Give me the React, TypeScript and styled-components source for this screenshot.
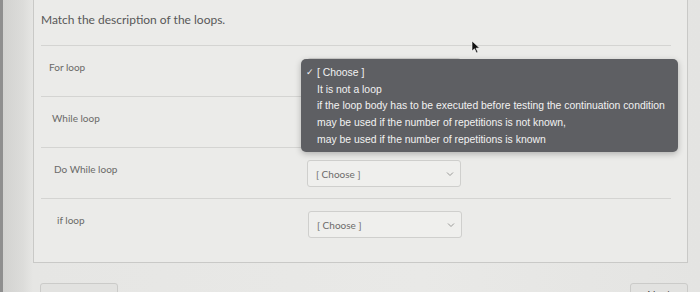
import React from "react";
import styled, { createGlobalStyle } from "styled-components";

const Global = createGlobalStyle`
  html, body { margin: 0; padding: 0; }
  body {
    width: 700px; height: 292px; overflow: hidden;
    background: #e7e7e5;
    font-family: Lato, "Open Sans", sans-serif;
  }
`;

const Page = styled.div`
  position: relative;
  width: 700px;
  height: 292px;
  box-sizing: border-box;
  border-left: 3px solid #8f8f8f;
  background: linear-gradient(90deg, #d2d2d0 0px, #dcdcda 20px, #e6e6e4 30px, #e9e9e7 60%, #e4e4e2 100%);
  padding-left: 30px;
  padding-right: 12px;
  overflow: hidden;
`;

const Card = styled.div`
  box-sizing: border-box;
  height: 263px;
  border: 1px solid #c9c9c7;
  border-top: none;
  background: #ebebe9;
  padding: 12px 16px 0 7px;
`;

const Title = styled.div`
  font-size: 12px;
  color: #585858;
  height: 33px;
`;

const Row = styled.div`
  display: flex;
  align-items: flex-start;
  height: 51px;
  box-sizing: border-box;
  border-top: 1px solid #d4d4d2;
`;

const Label = styled.div<{ $indent: number }>`
  box-sizing: border-box;
  flex: 0 0 266px;
  padding-left: ${(p) => 8 + p.$indent}px;
  padding-top: 15px;
  font-size: 10px;
  color: #6a6a68;
`;

const SelectWrap = styled.div<{ $shift: number }>`
  position: relative;
  margin-top: 12px;
  margin-left: ${(p) => p.$shift}px;
`;

const Select = styled.div<{ $covered?: boolean }>`
  box-sizing: border-box;
  width: 154px;
  height: 27px;
  border: 1px solid #cfcfcd;
  border-radius: 3px;
  background: #efefed;
  display: flex;
  align-items: center;
  justify-content: space-between;
  padding: 0 6px 0 8px;
  font-size: 10px;
  color: #6c6c6a;
  & > * { visibility: ${(p) => (p.$covered ? "hidden" : "visible")}; }
`;

const Menu = styled.div`
  position: absolute;
  left: -6px;
  top: 1px;
  width: 377px;
  height: 93px;
  box-sizing: border-box;
  border-radius: 5px;
  background: #5e5f63;
  box-shadow: 0 2px 6px rgba(0, 0, 0, 0.25);
  padding: 5px 0 0 5px;
  z-index: 2;
  font-family: "Liberation Sans", Arial, sans-serif;
`;

const MenuItem = styled.div`
  display: flex;
  height: 16.8px;
  align-items: center;
  font-size: 10.4px;
  color: #f2f2f2;
  white-space: nowrap;
`;

const Check = styled.span`
  width: 11px;
  font-size: 9px;
`;

const Footer = styled.div`
  display: flex;
  justify-content: space-between;
  padding: 20px 0 0 7px;
`;

const Btn = styled.div<{ $w: number }>`
  width: ${(p) => p.$w}px;
  height: 20px;
  box-sizing: border-box;
  border: 1px solid #cbcbc9;
  border-radius: 3px;
  background: #e2e2e0;
  font-size: 11px;
  color: #444;
  text-align: center;
  padding-top: 4px;
`;

const Cursor = styled.svg`
  position: absolute;
  left: 468px;
  top: 40px;
`;

const Chevron = () => (
  <svg width="8" height="6" viewBox="0 0 8 6">
    <path d="M1 1.5 L4 4.5 L7 1.5" fill="none" stroke="#9a9a98" strokeWidth="1" />
  </svg>
);

const options = [
  "[ Choose ]",
  "It is not a loop",
  "if the loop body has to be executed before testing the continuation condition",
  "may be used if the number of repetitions is not known,",
  "may be used if the number of repetitions is known",
];

const rows = [
  { label: "For loop", indent: 0, shift: 0, open: true, covered: true },
  { label: "While loop", indent: 3, shift: 0, open: false, covered: true },
  { label: "Do While loop", indent: 5, shift: 0, open: false, covered: false },
  { label: "if loop", indent: 8, shift: 1, open: false, covered: false },
];

export default function App() {
  return (
    <>
      <Global />
      <Page>
        <Card>
          <Title>Match the description of the loops.</Title>
          {rows.map((r) => (
            <Row key={r.label}>
              <Label $indent={r.indent}>{r.label}</Label>
              <SelectWrap $shift={r.shift}>
                <Select $covered={r.covered}>
                  <span>[ Choose ]</span>
                  <Chevron />
                </Select>
                {r.open && (
                  <Menu>
                    {options.map((o, i) => (
                      <MenuItem key={o}>
                        <Check>{i === 0 ? "✓" : ""}</Check>
                        {o}
                      </MenuItem>
                    ))}
                  </Menu>
                )}
              </SelectWrap>
            </Row>
          ))}
        </Card>
        <Footer>
          <Btn $w={78} />
          <Btn $w={58}>Next</Btn>
        </Footer>
        <Cursor width="10" height="14" viewBox="0 0 10 14">
          <path d="M1 1 L1 11 L3.5 8.8 L5.5 13 L7 12.3 L5 8.2 L8.5 8 Z" fill="#111" stroke="#fff" strokeWidth="0.6" />
        </Cursor>
      </Page>
    </>
  );
}
